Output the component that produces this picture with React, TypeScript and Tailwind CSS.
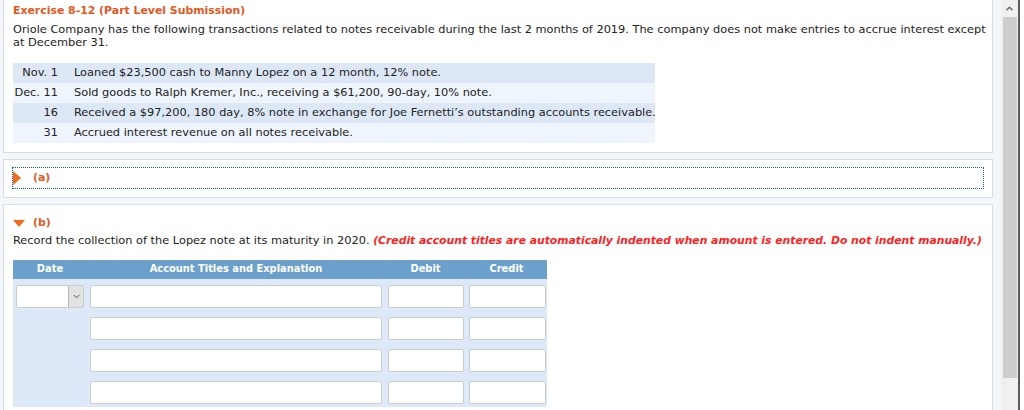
import React from "react";

const font = "font-['DejaVu_Sans',Verdana,sans-serif]";

const transactions = [
  { date: "Nov. 1", text: "Loaned $23,500 cash to Manny Lopez on a 12 month, 12% note." },
  { date: "Dec. 11", text: "Sold goods to Ralph Kremer, Inc., receiving a $61,200, 90-day, 10% note." },
  { date: "16", text: "Received a $97,200, 180 day, 8% note in exchange for Joe Fernetti\u2019s outstanding accounts receivable." },
  { date: "31", text: "Accrued interest revenue on all notes receivable." },
];

const TriangleRight = () => (
  <svg width="8" height="14" viewBox="0 0 8 14" className="block">
    <polygon points="0,0 8,7 0,14" fill="#f26a1b" />
  </svg>
);

const TriangleDown = () => (
  <svg width="12" height="7" viewBox="0 0 12 7" className="block">
    <polygon points="0,0 12,0 6,7" fill="#f26a1b" />
  </svg>
);

const Field = ({ className }: { className: string }) => (
  <div className={`h-[23px] bg-white border border-[#c9ccd0] rounded-[2px] ${className}`} />
);

const DateSelect = () => (
  <div className="h-[23px] w-[68px] bg-white border border-[#c9ccd0] rounded-[2px] flex justify-end">
    <div className="w-[15px] h-full bg-[#e3e3e3] border-l border-[#b5b5b5] flex items-center justify-center">
      <svg width="7" height="5" viewBox="0 0 7 5">
        <polyline points="0.5,0.8 3.5,3.8 6.5,0.8" fill="none" stroke="#555" strokeWidth="1" />
      </svg>
    </div>
  </div>
);

export default function App() {
  return (
    <div className={`w-[1024px] h-[410px] overflow-hidden bg-[#f4f7fa] flex text-[11.35px] text-[#222] ${font}`}>
      <div className="flex-1 pl-[3px] pr-[6px] flex flex-col gap-[6px] min-w-0">
        {/* question panel */}
        <div className="bg-white border border-[#d5dde6] border-t-0 pl-[9px] pr-[4px] pt-[4px] pb-[9px]">
          <div className="font-bold text-[10.9px] text-[#e2581e] leading-[14px]">Exercise 8-12 (Part Level Submission)</div>
          <p className="mt-[5px] leading-[13px]">
            Oriole Company has the following transactions related to notes receivable during the last 2 months of 2019. The company does not make entries to accrue interest except at December 31.
          </p>
          <div className="mt-[14px] w-[642px]">
            {transactions.map((t, i) => (
              <div
                key={t.date}
                className={`flex items-center h-[20px] ${i % 2 === 0 ? "bg-[#dde8f7]" : "bg-[#eef5fd]"}`}
              >
                <div className="w-[45px] text-right shrink-0 whitespace-nowrap">{t.date}</div>
                <div className="pl-[16px] whitespace-nowrap">{t.text}</div>
              </div>
            ))}
          </div>
        </div>

        {/* part a */}
        <div className="bg-white border border-[#d5dde6] h-[39px] pt-[7px] px-[8px]">
          <div className="h-[22px] border border-dotted border-[#1f5f8f] flex items-center gap-[12px]">
            <TriangleRight />
            <span className="font-bold text-[10.9px] text-[#e2581e]">(a)</span>
          </div>
        </div>

        {/* part b */}
        <div className="bg-white border border-[#d5dde6] border-b-0 flex-1 pl-[9px] pt-[11px]">
          <div className="flex items-center gap-[8px] h-[14px]">
            <TriangleDown />
            <span className="font-bold text-[10.9px] text-[#e2581e]">(b)</span>
          </div>
          <p className="mt-[3px] leading-[14px] whitespace-nowrap">
            Record the collection of the Lopez note at its maturity in 2020.{" "}
            <span className="font-bold italic text-[10.8px] text-[#ff1f1f]">
              (Credit account titles are automatically indented when amount is entered. Do not indent manually.)
            </span>
          </p>
          <div className="mt-[12px] w-[534px]">
            <div className="grid grid-cols-[74px_298px_81px_81px] h-[19px] bg-[#6b9fcc] text-white font-bold text-[9.9px] items-center">
              <div className="text-center">Date</div>
              <div className="text-center">Account Titles and Explanation</div>
              <div className="text-center">Debit</div>
              <div className="text-center">Credit</div>
            </div>
            <div className="bg-[#dde9f8] pt-[6px] pb-[3px] flex flex-col gap-[9px]">
              {[0, 1, 2, 3].map((r) => (
                <div key={r} className="flex items-center">
                  <div className="w-[77px] pl-[3px] shrink-0">{r === 0 && <DateSelect />}</div>
                  <Field className="w-[292px]" />
                  <Field className="w-[76px] ml-[6px]" />
                  <Field className="w-[77px] ml-[5px]" />
                </div>
              ))}
            </div>
          </div>
        </div>
      </div>

      {/* scrollbar */}
      <div className="w-[25px] shrink-0 flex">
        <div className="w-[17px] ml-[2px] bg-[#f0f0f0] flex flex-col items-center">
          <div className="h-[17px] flex items-center justify-center">
            <svg width="7" height="5" viewBox="0 0 7 5">
              <polyline points="0.5,4.2 3.5,1.2 6.5,4.2" fill="none" stroke="#606060" strokeWidth="1.3" />
            </svg>
          </div>
          <div className="w-[14px] h-[361px] bg-[#cdcdcd]" />
        </div>
        <div className="w-[2px] bg-[#5a5a5a]" />
        <div className="flex-1 bg-white" />
      </div>
    </div>
  );
}
